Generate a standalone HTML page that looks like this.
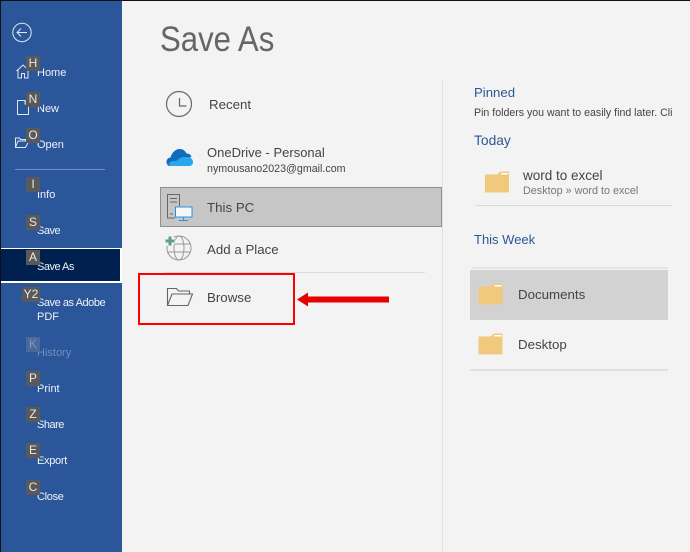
<!DOCTYPE html>
<html><head><meta charset="utf-8"><style>
html,body{margin:0;padding:0}
body{width:690px;height:552px;position:relative;overflow:hidden;background:#f3f3f3;font-family:"Liberation Sans","DejaVu Sans",sans-serif}
div,span{position:absolute;white-space:nowrap}
.m{color:#eef2f8;font-size:11px;left:37px;line-height:14px}
.k{left:26px;width:14px;height:15px;background:#59595b;color:#e8e8e8;font-size:12px;line-height:15px;text-align:center}
.t{color:#444;font-size:13.300px;line-height:18px}
.h{color:#2b5797;font-size:13.200px;line-height:18px}
svg{position:absolute}
</style></head><body>
<div style="left:0;top:0;width:690px;height:1px;background:#111"></div>
<div style="left:0;top:0;width:1px;height:552px;background:#111"></div>
<div style="left:1px;top:1px;width:121px;height:551px;background:#2b579a"></div>
<div style="left:1px;top:248px;width:121px;height:35px;background:#fff"></div>
<div style="left:1px;top:249px;width:119px;height:32px;background:#002050"></div>
<svg style="left:11px;top:22px" width="22" height="22" viewBox="0 0 22 22" fill="none" stroke="#dfe7f2" stroke-width="1"><circle cx="11" cy="10.500" r="9.200"/><path d="M16 10.500H6.500M10 6.500l-4 4 4 4"/></svg>
<svg style="left:15px;top:63px" width="16" height="16" viewBox="0 0 16 16" fill="none" stroke="#dfe7f2" stroke-width="1"><path d="M1.500 8L8 2l6.500 6M3 7v8h3.500v-4.500h3V15H13V7"/></svg>
<svg style="left:16px;top:99px" width="14" height="17" viewBox="0 0 14 17" fill="none" stroke="#dfe7f2" stroke-width="1"><path d="M1.500 1.500H9l3.500 3.500v10.500h-11zM9 1.500V5h3.500"/></svg>
<svg style="left:15px;top:136px" width="16" height="14" viewBox="0 0 16 14" fill="none" stroke="#dfe7f2" stroke-width="1"><path d="M.5 11.500V2h4l1 1.500h5V5M.5 11.500h10L14 5H3z"/></svg>
<div style="left:15px;top:169px;width:90px;height:1px;background:#6f8fbd"></div>
<div class="m" style="top:66px">Home</div>
<div class="m" style="top:102px">New</div>
<div class="m" style="top:138px">Open</div>
<div class="m" style="top:188px">Info</div>
<div class="m" style="top:224px;letter-spacing:-.5px">Save</div>
<div class="m" style="top:260px;letter-spacing:-.5px">Save As</div>
<div class="m" style="top:296px;letter-spacing:-.45px">Save as Adobe</div>
<div class="m" style="top:310px">PDF</div>
<div class="m" style="top:346px;color:#6f8fbd">History</div>
<div class="m" style="top:382px">Print</div>
<div class="m" style="top:418px;letter-spacing:-.5px">Share</div>
<div class="m" style="top:454px;letter-spacing:-.3px">Export</div>
<div class="m" style="top:490px;letter-spacing:-.3px">Close</div>
<div class="k" style="top:56px">H</div>
<div class="k" style="top:92px">N</div>
<div class="k" style="top:128px">O</div>
<div class="k" style="top:177px">I</div>
<div class="k" style="top:215px">S</div>
<div class="k" style="top:250px">A</div>
<div class="k" style="left:22px;width:18px;top:287px">Y2</div>
<div class="k" style="top:337px;background:#4a6a9c;color:#7f97bd">K</div>
<div class="k" style="top:371px">P</div>
<div class="k" style="top:407px">Z</div>
<div class="k" style="top:443px">E</div>
<div class="k" style="top:480px">C</div>

<div style="left:160px;top:19px;font-size:35px;line-height:42px;color:#666;transform:scaleX(.89);transform-origin:0 0">Save As</div>
<svg style="left:165px;top:90px" width="28" height="28" viewBox="0 0 28 28" fill="none" stroke="#666" stroke-width="1.200"><circle cx="14" cy="14" r="12.500"/><path d="M14.500 8v8h7"/></svg>
<div class="t" style="left:209px;top:96px">Recent</div>
<svg style="left:166px;top:149px" width="27" height="18" viewBox="0 0 27 18"><path d="M3 17C-1 15 0 9 4.500 8.500 6 3 10 0 13.500 0c3.500 0 5.500 1.500 7 4.500 2.500 0 4 1 5 3L12 16z" fill="#0f6cbd"/><path d="M5 17h18c3 0 4-2 4-4 0-3-2.500-5-6-5-3 0-5 0-7 1-3 2-3 3-5 3-3 0-6 1-6 3 0 1 1 2 2 2z" fill="#28a8ea"/></svg>
<div class="t" style="left:207px;top:144px;font-size:13px">OneDrive - Personal</div>
<div style="left:207px;top:162px;font-size:10.700px;line-height:14px;color:#444">nymousano2023@gmail.com</div>
<div style="left:160px;top:187px;width:280px;height:38px;background:#c6c6c6;border:1px solid #8f8f8f"></div>
<svg style="left:165px;top:193px" width="30" height="30" viewBox="0 0 30 30" fill="none" stroke="#666"><path d="M10 25H2.500V1.500h12V13M5 5.500h7M5 9h7M5 21h3"/><rect x="10.500" y="14" width="16.500" height="10" fill="#f4f8fc" stroke="#2f8fdc"/><path d="M18.500 24v3.500M14 27.500h9" stroke="#2f8fdc"/></svg>
<div class="t" style="left:207px;top:199px">This PC</div>
<svg style="left:164px;top:233px" width="30" height="30" viewBox="0 0 30 30" fill="none" stroke="#999"><circle cx="15" cy="15" r="12"/><ellipse cx="15" cy="15" rx="5" ry="12"/><path d="M3 11h24M3 19h24"/><circle cx="6" cy="8" r="5.500" fill="#f3f3f3" stroke="none"/><path d="M6 3.500v9M1.500 8h9" stroke="#5f9e8f" stroke-width="3"/></svg>
<div class="t" style="left:207px;top:241px">Add a Place</div>
<div style="left:165px;top:272px;width:260px;height:1px;background:#dcdcdc"></div>
<div style="left:138px;top:273px;width:153px;height:48px;border:2px solid #f00"></div>
<svg style="left:166px;top:287px" width="28" height="20" viewBox="0 0 28 20" fill="none" stroke="#666" stroke-width="1.100"><path d="M1.500 18.500V1.500h9l2 2.500h11v3M1.500 18.500H22L26.500 7H6z"/></svg>
<div class="t" style="left:207px;top:289px">Browse</div>
<svg style="left:295px;top:290px" width="95" height="18" viewBox="0 0 95 18"><path d="M2 9.500L13 2.500v4h81v6H13v4z" fill="#e60000"/></svg>
<div style="left:442px;top:80px;width:1px;height:472px;background:#e2e2e2"></div>

<div class="h" style="left:474px;top:84px">Pinned</div>
<div style="left:474px;top:106px;width:198px;overflow:hidden;font-size:10.600px;line-height:15px;color:#444">Pin folders you want to easily find later. Click the</div>
<div class="h" style="left:474px;top:132px;font-size:13.800px">Today</div>
<svg style="left:485px;top:171px" width="25" height="22" viewBox="0 0 25 22"><path d="M0 3.500h12l3.500-3h8.500v21H0z" fill="#f0c97c"/><path d="M16 2h7v1.500h-7z" fill="#fff"/></svg>
<div style="left:523px;top:167px;font-size:13.500px;line-height:17px;color:#444">word to excel</div>
<div style="left:523px;top:184px;font-size:10.800px;line-height:15px;color:#777">Desktop » word to excel</div>
<div style="left:476px;top:205px;width:196px;height:1px;background:#d8d8d8"></div>
<div class="h" style="left:474px;top:231px;font-size:13px">This Week</div>
<div style="left:472px;top:267px;width:196px;height:2px;background:#e6e6e6"></div>
<div style="left:470px;top:270px;width:198px;height:50px;background:#d2d2d2"></div>
<svg style="left:478px;top:283px" width="25" height="22" viewBox="0 0 25 22"><path d="M.5 3.500h12l3.500-3h8.500v21H.5z" fill="#f0c97c"/><path d="M16.500 2h7v1.500h-7z" fill="#fff"/></svg>
<div class="t" style="left:518px;top:286px">Documents</div>
<svg style="left:478px;top:333px" width="25" height="22" viewBox="0 0 25 22"><path d="M.5 3.500h12l3.500-3h8.500v21H.5z" fill="#f0c97c"/><path d="M16.500 2h7v1.500h-7z" fill="#fff"/></svg>
<div class="t" style="left:518px;top:336px">Desktop</div>
<div style="left:470px;top:369px;width:198px;height:2px;background:#e0e0e0"></div>
</body></html>
